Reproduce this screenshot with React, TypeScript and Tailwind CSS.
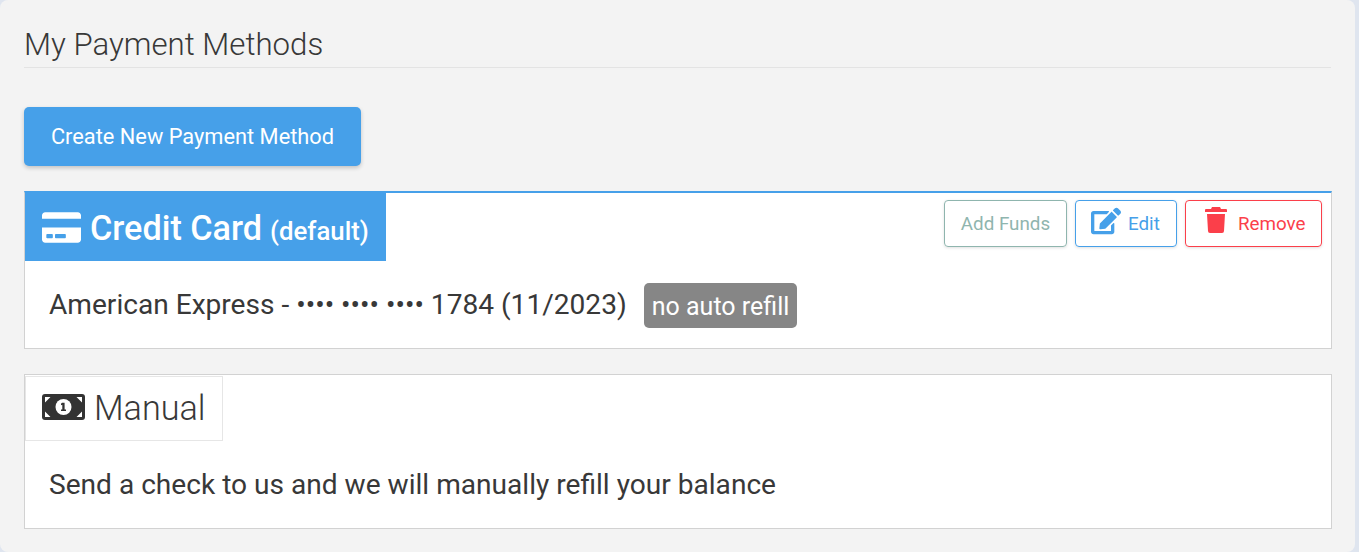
import { FaCreditCard, FaEdit } from 'react-icons/fa'

function MoneyIcon() {
  return (
    <svg viewBox="0 0 43 26" className="mb-[4px] h-[26px] w-[43px] shrink-0">
      <rect width="43" height="26" rx="3" fill="#333333" />
      <circle cx="21.5" cy="13" r="8" fill="#ffffff" />
      <path d="M20 8.8h2.6v6.6h1.4v1.6h-5v-1.6h1.3v-4.6l-1.3.5v-1.5z" fill="#333333" />
      <path d="M3 3h5.5l-5.5 5.5zM40 3h-5.5l5.5 5.5zM3 23h5.5l-5.5-5.5zM40 23h-5.5l5.5-5.5z" fill="#ffffff" />
    </svg>
  )
}

function TrashIcon() {
  return (
    <svg viewBox="0 0 22 26" className="mb-[8px] h-[26px] w-[22px] shrink-0" fill="currentColor">
      <path d="M7 0h8l1 2h5a1 1 0 0 1 1 1v2H0V3a1 1 0 0 1 1-1h5z" />
      <path d="M2 7h18l-1 17a2 2 0 0 1-2 2H5a2 2 0 0 1-2-2z" />
    </svg>
  )
}

export default function App() {
  return (
    <div className="h-[552px] overflow-hidden bg-[#dfe5ef] font-['Roboto',sans-serif] text-[#383838]">
      <div className="h-[552px] w-[1355px] rounded-lg bg-[#f3f3f3] px-6 pt-[23px]">
        <h1 className="h-[45px] border-b border-[#e3e3e3] text-[31.2px] leading-[43px] font-light">My Payment Methods</h1>

        <button className="mt-[39px] block h-[59px] w-[337px] rounded-[5px] bg-[#46a0e9] pt-[2px] text-[21.8px] text-white shadow-[0_2px_4px_rgba(0,0,0,0.2)]">
          Create New Payment Method
        </button>

        {/* credit card */}
        <section className="mt-[25px] h-[158px] w-[1308px] border border-t-2 border-[#d2d2d2] border-t-[#46a0e9] bg-white">
          <div className="flex items-start justify-between">
            <div className="flex h-[68px] w-[361px] items-center bg-[#46a0e9] pl-[17px] text-white">
              <FaCreditCard className="size-[39px]" />
              <span className="mt-[4px] ml-[9px] text-[34.2px] font-medium">Credit Card</span>
              <span className="mt-[9px] ml-[8px] text-[25.8px] font-medium">(default)</span>
            </div>
            <div className="mt-[7px] mr-[9px] flex gap-2">
              <button className="h-[47px] w-[123px] rounded border border-[#8fb5ae] pt-[2px] text-[18.8px] text-[#8fb5ae] shadow-[0_1px_3px_rgba(0,0,0,0.12)]">
                Add Funds
              </button>
              <button className="flex h-[47px] w-[102px] items-center rounded border border-[#46a0e9] pl-[15px] text-[18.8px] text-[#46a0e9] shadow-[0_1px_3px_rgba(0,0,0,0.12)]">
                <FaEdit className="mb-[5px] size-[30px]" />
                <span className="mt-[2px] ml-[7px]">Edit</span>
              </button>
              <button className="flex h-[47px] w-[137px] items-center rounded border border-[#fb3f4a] pl-[19px] text-[18.8px] text-[#fb3f4a] shadow-[0_1px_3px_rgba(0,0,0,0.12)]">
                <TrashIcon />
                <span className="mt-[2px] ml-[11px]">Remove</span>
              </button>
            </div>
          </div>
          <div className="mt-[22px] flex items-center pl-6 text-[28.1px]">
            <span>American Express - •••• •••• •••• 1784 (11/2023)</span>
            <span className="ml-[17px] flex h-[45px] items-center rounded-[5px] bg-[#868686] px-2 pt-[2px] text-[25px] text-white">no auto refill</span>
          </div>
        </section>

        {/* manual */}
        <section className="mt-[25px] h-[155px] w-[1308px] border border-[#d2d2d2] bg-white">
          <div className="mt-px flex h-[65px] w-[198px] items-center border border-[#e6e6e6] pl-[16px]">
            <MoneyIcon />
            <span className="ml-[9px] text-[34.2px] font-light">Manual</span>
          </div>
          <p className="mt-[23px] pl-6 text-[28.1px]">Send a check to us and we will manually refill your balance</p>
        </section>
      </div>
    </div>
  )
}
